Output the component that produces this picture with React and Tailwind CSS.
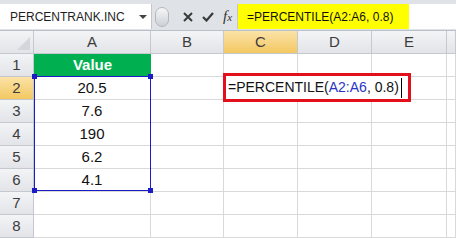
import React from "react";

const COLS = ["A", "B", "C", "D", "E", ""];
const VALUES = { 2: "20.5", 3: "7.6", 4: "190", 5: "6.2", 6: "4.1" };

function FormulaBar() {
  return (
    <div className="flex h-[31px] bg-[#dfe3e8] pt-[4px] pb-[2px] border-b border-[#b9c0c9]">
      {/* Name box */}
      <div className="relative flex items-center w-[152px] h-[25px] bg-white border-r border-[#c6c6c6] pl-[10px] text-[12px] text-[#1e1e1e]">
        PERCENTRANK.INC
        <span className="absolute left-[139px] top-[11px] w-0 h-0 border-l-[4px] border-r-[4px] border-t-[4px] border-l-transparent border-r-transparent border-t-[#444]" />
      </div>
      {/* Buttons */}
      <div className="flex items-center w-[85px] h-[25px]">
        <div className="ml-[3px] w-[14px] h-[20px] rounded-full bg-gradient-to-b from-[#f6f6f6] to-[#cdd1d6] border border-[#b4b8be]" />
        <svg className="ml-[14px]" width="10" height="10" viewBox="0 0 10 10">
          <path d="M1 1 L9 9 M9 1 L1 9" stroke="#3a3a3a" strokeWidth="2" />
        </svg>
        <svg className="ml-[9px]" width="12" height="10" viewBox="0 0 12 10">
          <path d="M1 5 L4.5 8.5 L11 1" stroke="#3a3a3a" strokeWidth="2.2" fill="none" />
        </svg>
        <span className="ml-[9px] text-[15px] italic text-[#333]" style={{ fontFamily: "'Liberation Serif', serif" }}>
          f<span className="text-[11px]">x</span>
        </span>
      </div>
      {/* Formula input */}
      <div className="flex-1 flex h-[25px] bg-white border-l border-[#c6c6c6]">
        <div className="flex items-center w-[171px] bg-[#ffff00] pl-[9px] text-[12px] text-[#111]">
          =PERCENTILE(A2:A6, 0.8)
        </div>
      </div>
    </div>
  );
}

function HeaderCell({ children, active }) {
  return (
    <div
      className={`flex items-center justify-center border-r border-b border-[#c5c9cf] text-[15px] text-[#3c3c3c] ${
        active ? "bg-gradient-to-b from-[#fbe2a6] to-[#f3c860]" : "bg-gradient-to-b from-[#f3f4f6] to-[#e2e4e8]"
      }`}
    >
      {children}
    </div>
  );
}

export default function App() {
  const rows = [1, 2, 3, 4, 5, 6, 7, 8];
  return (
    <div className="w-[456px] h-[238px] overflow-hidden bg-white" style={{ fontFamily: "'Liberation Sans', Arial, sans-serif" }}>
      <FormulaBar />
      <div className="relative">
        <div className="grid grid-cols-[34px_117px_73px_74px_74px_75px_1fr] auto-rows-[23px]">
          {/* Corner */}
          <div className="relative border-r border-b border-[#c5c9cf] bg-gradient-to-b from-[#f3f4f6] to-[#e2e4e8]">
            <svg className="absolute right-[3px] bottom-[3px]" width="13" height="13" viewBox="0 0 13 13">
              <path d="M13 0 L13 13 L0 13 Z" fill="#d3d6db" />
            </svg>
          </div>
          {COLS.map((c, i) => (
            <HeaderCell key={"h" + i} active={c === "C"}>
              {c}
            </HeaderCell>
          ))}
          {rows.map((r) => (
            <React.Fragment key={r}>
              <HeaderCell active={r === 2}>{r}</HeaderCell>
              {COLS.map((c, i) => {
                if (c === "A" && r === 1) {
                  return (
                    <div key={c + r} className="flex items-center justify-center bg-[#00b050] text-white font-bold text-[15px]">
                      Value
                    </div>
                  );
                }
                return (
                  <div key={c + r + i} className="flex items-center justify-center border-r border-b border-[#d9d9d9] text-[15px] text-[#111]">
                    {c === "A" ? VALUES[r] : null}
                  </div>
                );
              })}
            </React.Fragment>
          ))}
        </div>

        {/* Selection A2:A6 */}
        <div className="absolute left-[34px] top-[45px] w-[117px] h-[115px] border border-[#1c1cc7] pointer-events-none">
          <span className="absolute -left-[3px] -top-[3px] w-[5px] h-[5px] bg-[#1c1cc7]" />
          <span className="absolute -right-[3px] -top-[3px] w-[5px] h-[5px] bg-[#1c1cc7]" />
          <span className="absolute -left-[3px] -bottom-[3px] w-[5px] h-[5px] bg-[#1c1cc7]" />
          <span className="absolute -right-[3px] -bottom-[3px] w-[5px] h-[5px] bg-[#1c1cc7]" />
        </div>

        {/* Formula in C2 with red highlight */}
        <div className="absolute left-[223px] top-[42px] w-[188px] h-[29px] border-[3px] border-[#e3101c] bg-white flex items-center pl-[2px] text-[14px] text-[#111]">
          =PERCENTILE(<span className="text-[#2b35c4]">A2:A6</span>, 0.8)
          <span className="ml-[2px] w-[1px] h-[20px] bg-black" />
        </div>
      </div>
    </div>
  );
}
